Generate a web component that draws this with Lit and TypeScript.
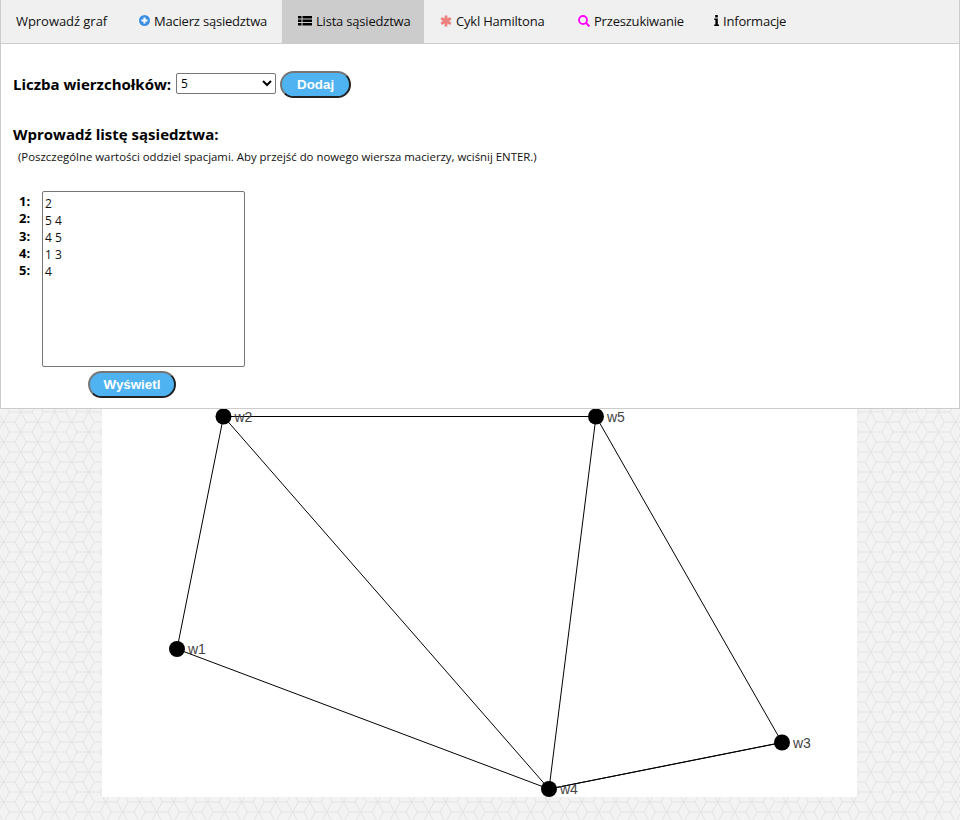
import { LitElement, html, css, svg, unsafeCSS } from "lit";
import { customElement } from "lit/decorators.js";

// flat-top rhombille tile, wraps at 34x20
const lines = "M0 10L5.67 0H17L22.67 10L17 20H5.67L0 10M22.67 10H34M11.33 10H22.67M11.33 10L5.67 0M11.33 10L5.67 20M28.33 20H40M28.33 0H40M-5.67 0H5.67M-5.67 20H5.67M28.33 20L22.67 10M28.33 0L22.67 10M34 10L40 20M34 10L40 0";
const tile = `<svg xmlns='http://www.w3.org/2000/svg' width='34' height='20'><rect width='34' height='20' fill='#f3f3f3'/><path d='${lines}' fill='none' stroke='#e3e3e3' stroke-width='1'/></svg>`;
const tileUrl = `url("data:image/svg+xml,${encodeURIComponent(tile)}")`;

interface GraphNode { name: string; x: number; y: number; }

const NODES: GraphNode[] = [
    { name: "w1", x: 75, y: 240 },
    { name: "w2", x: 121.5, y: 7.5 },
    { name: "w3", x: 680, y: 333.5 },
    { name: "w4", x: 447, y: 380 },
    { name: "w5", x: 494, y: 7.5 },
];

const EDGES: [number, number][] = [[0, 1], [1, 4], [1, 3], [3, 2], [3, 2], [2, 4], [3, 4], [0, 3]];

@customElement("app-root")
export class AppRoot extends LitElement {
    static styles = css`
        :host {
            display: block;
            height: 820px;
            overflow: hidden;
            background-image: ${unsafeCSS(tileUrl)};
            background-position: -2px 2px;
            font-family: "Open Sans", "Noto Sans", sans-serif;
            color: #000;
        }

        .panel {
            background: #fff;
            border: 1px solid #ccc;
            border-top: 0;
            height: 409px;
            box-sizing: border-box;
        }

        .tabs {
            display: flex;
            height: 44px;
            background: #f0f0f0;
            border-bottom: 1px solid #ccc;
            box-sizing: border-box;
            font-size: 13px;
            letter-spacing: -0.2px;
        }

        .tab {
            display: flex;
            align-items: center;
            gap: 4px;
            padding: 0 0 2px 16px;
            box-sizing: border-box;
            white-space: nowrap;
            color: #111;
        }

        .tab.first { padding-left: 15px; letter-spacing: -0.05px; }
        .tab.active { background: #ccc; }

        .count {
            display: flex;
            align-items: center;
            padding: 25px 0 0 12px;
        }

        .heading {
            font-size: 15px;
            font-weight: 700;
            line-height: 20px;
            margin: 0;
        }

        select {
            width: 100px;
            height: 21px;
            margin: 0 4px 0 5px;
            font: 12px "Open Sans", sans-serif;
            background: #fff;
            border: 1px solid #767676;
            border-radius: 2px;
            box-sizing: border-box;
            color: #000;
        }

        button {
            display: block;
            height: 27px;
            padding: 0;
            font: bold 13.33px "Liberation Sans", sans-serif;
            color: #fff;
            background: #4eb3f0;
            border: 2px solid;
            border-color: #767676 #222 #222 #767676;
            border-radius: 14px;
        }

        .add { width: 71px; margin-top: 2px; }
        .show { width: 88px; margin: 4px 0 0 87px; }

        .list-title { padding: 26px 0 0 12px; }

        .hint {
            margin: 4px 0 0 17px;
            font-size: 11.4px;
            line-height: 18px;
            color: #111;
        }

        .editor {
            display: flex;
            margin: 25px 0 0 18px;
        }

        .numbers {
            width: 23px;
            padding-top: 2px;
            font-size: 13px;
            font-weight: 700;
            line-height: 17.3px;
        }

        textarea {
            display: block;
            width: 203px;
            height: 176px;
            padding: 3px 2px 2px;
            margin: 0;
            box-sizing: border-box;
            resize: none;
            font: 12px/17px "Open Sans", sans-serif;
            border: 1px solid #767676;
            border-radius: 2px;
            color: #111;
        }

        .graph {
            display: block;
            width: 755px;
            height: 388px;
            margin-left: 102px;
            background: #fff;
        }

        .graph line { stroke: #000; stroke-width: 1; }
        .graph circle { fill: #000; }
        .graph text {
            font: 14px "Liberation Sans", sans-serif;
            fill: #444;
        }
    `;

    private renderGraph() {
        return html`
            <svg class="graph" viewBox="0 0 755 388">
                ${EDGES.map(([a, b]) => svg`<line x1=${NODES[a].x} y1=${NODES[a].y} x2=${NODES[b].x} y2=${NODES[b].y}></line>`)}
                ${NODES.map((n) => svg`
                    <circle cx=${n.x} cy=${n.y} r="8"></circle>
                    <text x=${n.x + 11} y=${n.y + 5}>${n.name}</text>
                `)}
            </svg>
        `;
    }

    render() {
        return html`
            <div class="panel">
                <nav class="tabs">
                    <div class="tab first" style="width:122px">Wprowadź graf</div>
                    <div class="tab" style="width:159px">
                        <svg width="11" height="11" viewBox="0 0 11 11"><circle cx="5.5" cy="5.5" r="5.5" fill="#3b8fe2"></circle><path d="M5.5 2.5v6M2.5 5.5h6" stroke="#fff" stroke-width="2"></path></svg>
                        Macierz sąsiedztwa
                    </div>
                    <div class="tab active" style="width:142px">
                        <svg width="14" height="11" viewBox="0 0 14 11"><path d="M0 1h3.5v2.5H0zM4.5 1H14v2.5H4.5zM0 4.5h3.5V7H0zM4.5 4.5H14V7H4.5zM0 8h3.5v2.5H0zM4.5 8H14v2.5H4.5z" fill="#000"></path></svg>
                        Lista sąsiedztwa
                    </div>
                    <div class="tab" style="width:138px">
                        <svg width="12" height="12" viewBox="0 0 12 12"><path d="M6 .5v11M1.2 3.2l9.6 5.6M10.8 3.2L1.2 8.8" stroke="#ee7f7f" stroke-width="2.8"></path></svg>
                        Cykl Hamiltona
                    </div>
                    <div class="tab" style="width:136px">
                        <svg width="12" height="12" viewBox="0 0 12 12"><circle cx="5" cy="5" r="4" fill="none" stroke="#f0f" stroke-width="1.8"></circle><path d="M8 8l3.4 3.4" stroke="#f0f" stroke-width="2"></path></svg>
                        Przeszukiwanie
                    </div>
                    <div class="tab" style="width:103px">
                        <svg width="5" height="11" viewBox="0 0 5 11"><path d="M1.2 0h2.6v2.4H1.2zM.3 3.6h3.5v5.9H5V11H.2V9.5h1.2V5.1H.3z" fill="#000"></path></svg>
                        Informacje
                    </div>
                </nav>
                <div class="count">
                    <span class="heading">Liczba wierzchołków:</span>
                    <select>
                        ${[2, 3, 4, 5, 6, 7, 8].map((n) => html`<option ?selected=${n === 5}>${n}</option>`)}
                    </select>
                    <button class="add">Dodaj</button>
                </div>
                <div class="list-title"><h2 class="heading">Wprowadź listę sąsiedztwa:</h2></div>
                <p class="hint">(Poszczególne wartości oddziel spacjami. Aby przejść do nowego wiersza macierzy, wciśnij ENTER.)</p>
                <div class="editor">
                    <div class="numbers">
                        ${[1, 2, 3, 4, 5].map((n) => html`<div>${n}:</div>`)}
                    </div>
                    <textarea .value=${"2\n5 4\n4 5\n1 3\n4"}></textarea>
                </div>
                <button class="show">Wyświetl</button>
            </div>
            ${this.renderGraph()}
        `;
    }
}
